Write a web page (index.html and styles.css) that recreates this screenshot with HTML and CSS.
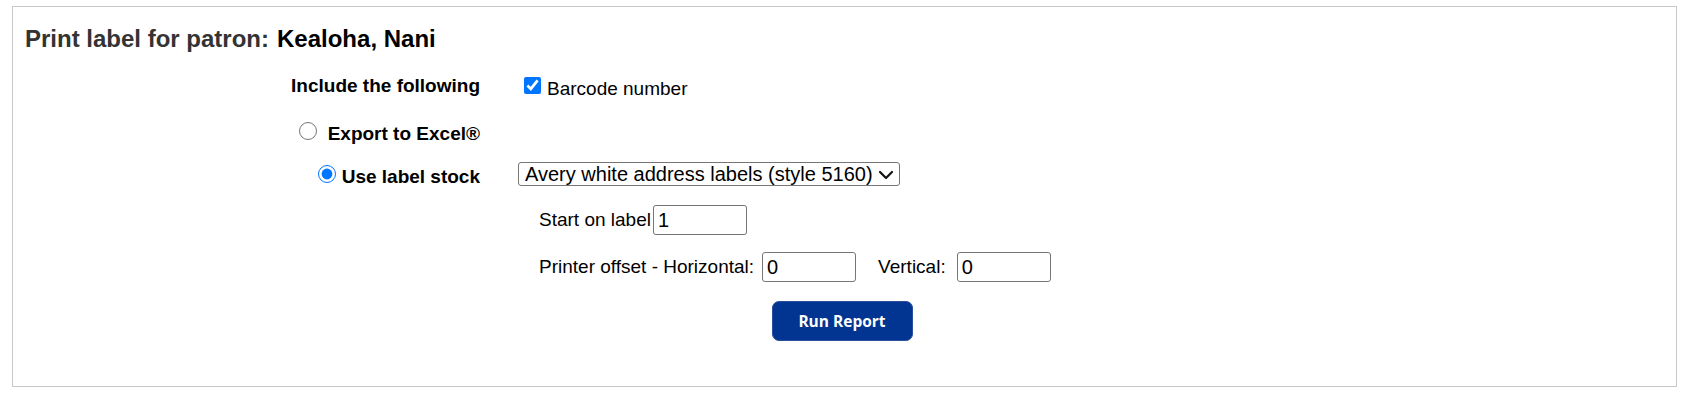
FILE: index.html
```html
<!DOCTYPE html>
<html lang="en">
<head>
<meta charset="utf-8">
<title>Print label for patron</title>
<link rel="stylesheet" href="styles.css">
</head>
<body>
<div class="page">
  <div class="panel">
    <h1 class="title"><span class="title-label">Print label for patron:</span><span class="title-name">Kealoha, Nani</span></h1>
    <form class="form">
      <div class="row row-include">
        <div class="lab"><span>Include the following</span></div>
        <div class="val val-check"><input type="checkbox" class="check" checked><span>Barcode number</span></div>
      </div>
      <div class="row row-excel">
        <div class="lab lab-radio"><input type="radio" name="out" class="radio radio-excel"><span>Export to Excel®</span></div>
      </div>
      <div class="row row-stock">
        <div class="lab lab-radio lab-stock"><input type="radio" name="out" class="radio radio-stock" checked><span>Use label stock</span></div>
        <div class="val">
          <div class="select-wrap">
            <select class="select"><option>Avery white address labels (style 5160)</option></select>
            <svg class="chev" width="16" height="10" viewBox="0 0 16 10"><polyline points="2,2 8,8 14,2" fill="none" stroke="#111" stroke-width="2.2" stroke-linecap="round" stroke-linejoin="round"/></svg>
          </div>
        </div>
      </div>
      <div class="row row-start">
        <div class="lab"></div>
        <div class="val sub"><span class="sub-label">Start on label</span><input type="text" class="text-in in-start" value="1"></div>
      </div>
      <div class="row row-offset">
        <div class="lab"></div>
        <div class="val sub"><span class="sub-label">Printer offset - Horizontal:</span><input type="text" class="text-in in-h" value="0"><span class="sub-label vert">Vertical:</span><input type="text" class="text-in in-v" value="0"></div>
      </div>
      <div class="actions"><button type="button" class="run">Run Report</button></div>
    </form>
  </div>
</div>
</body>
</html>
```
FILE: styles.css
```css
* { box-sizing: border-box; }
html, body { margin: 0; padding: 0; background: #fff; }
body { font-family: "Liberation Sans", Arial, sans-serif; color: #000; }

.page { padding: 6px 10px 0 12px; }

.panel {
  border: 1px solid #c8c8c8;
  padding: 18px 17px 45px 12px;
}

.title {
  margin: 0;
  font-size: 24px;
  line-height: 28px;
  font-weight: 700;
  color: #333;
}
.title-name { color: #000; margin-left: 8px; }

.form { margin: 22px 0 0 0; }

.row { display: flex; align-items: flex-start; }

.lab {
  flex: none;
  width: 455px;
  display: flex;
  justify-content: flex-end;
  align-items: flex-start;
  font-size: 19px;
  line-height: 22px;
  font-weight: 700;
  color: #000;
}

.val {
  margin-left: 38px;
  display: flex;
  align-items: flex-start;
  font-size: 19px;
  line-height: 22px;
  color: #000;
}

.val-check { padding-top: 3px; }
.check { width: 17px; height: 17px; margin: -1px 6px 0 6px; flex: none; }

.row-excel { margin-top: 23px; }
.radio { width: 18px; height: 18px; flex: none; }
.radio-excel { margin: -1px 11px 0 0; }

.row-stock { margin-top: 17px; }
.lab-stock { padding-top: 4px; }
.radio-stock { margin: -1px 6px 0 0; }

.select-wrap { position: relative; width: 382px; height: 24px; }
.select {
  -webkit-appearance: none;
  appearance: none;
  width: 100%;
  height: 24px;
  margin: 0;
  border: 1px solid #767676;
  border-radius: 3px;
  background: #fff;
  color: #000;
  font-family: "Liberation Sans", Arial, sans-serif;
  font-size: 20px;
  padding: 0 0 0 6px;
}
.chev { position: absolute; right: 6px; top: 8px; pointer-events: none; }

.sub { padding-left: 21px; }
.sub-label { padding-top: 4px; }

.text-in {
  width: 94px;
  height: 30px;
  margin: 0;
  border: 1px solid #767676;
  border-radius: 3px;
  padding: 0 4px;
  font-family: "Liberation Sans", Arial, sans-serif;
  font-size: 20px;
  color: #000;
  background: #fff;
  flex: none;
}

.row-start { margin-top: 17px; }
.in-start { margin-left: 2px; }

.row-offset { margin-top: 17px; }
.in-h { margin-left: 8px; }
.vert { margin-left: 22px; }
.in-v { margin-left: 11px; }

.actions { margin-top: 19px; display: flex; justify-content: center; }
.run {
  width: 141px;
  height: 40px;
  background: #013591;
  border: 1px solid #2a4f9c;
  border-radius: 7px;
  color: #fff;
  font-family: "Open Sans", sans-serif;
  font-weight: 700;
  font-size: 15.5px;
  padding: 0;
}
```
